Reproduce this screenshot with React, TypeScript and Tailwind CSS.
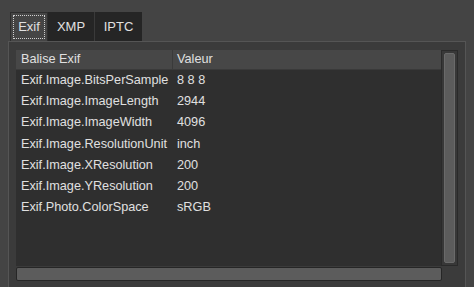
const rows: [string, string][] = [
  ['Exif.Image.BitsPerSample', '8 8 8'],
  ['Exif.Image.ImageLength', '2944'],
  ['Exif.Image.ImageWidth', '4096'],
  ['Exif.Image.ResolutionUnit', 'inch'],
  ['Exif.Image.XResolution', '200'],
  ['Exif.Image.YResolution', '200'],
  ['Exif.Photo.ColorSpace', 'sRGB'],
];

export default function App() {
  return (
    <div
      className="w-[474px] h-[287px] bg-[#444444] text-[12.7px] text-[#e0e0e0] overflow-hidden pt-[12px] pl-[8px] pr-[8px]"
      style={{ fontFamily: '"Liberation Sans", Arial, sans-serif' }}
    >
      {/* tabs */}
      <div className="flex h-[29px] pl-[2px] text-[13px]">
        <div className="w-[38px] bg-[#454545] border border-[#2e2e2e] border-b-0 p-[2px] flex">
          <div className="flex-1 border border-dotted border-[#d0d0d0] flex items-center justify-center">
            Exif
          </div>
        </div>
        <div className="w-[47px] bg-[#252525] border-r border-[#3a3a3a] flex items-center justify-center">
          XMP
        </div>
        <div className="w-[47px] bg-[#252525] flex items-center justify-center">IPTC</div>
      </div>

      {/* pane */}
      <div className="h-[250px] w-[458px] border-t border-l border-r border-[#555555] bg-[#3b3b3b] pt-[8px] pl-[7px] pr-[7px]">
        <div className="flex h-[216px]">
          <div className="w-[426px] bg-[#2f2f2f] flex flex-col">
            <div className="flex h-[20px] shrink-0 bg-[#474747] border-b border-[#3a3a3a]">
              <div className="w-[157px] pl-[5px] flex items-center border-r border-[#3a3a3a]">Balise Exif</div>
              <div className="flex-1 pl-[4px] flex items-center">Valeur</div>
            </div>
            {rows.map(([k, v]) => (
              <div key={k} className="flex h-[21.17px] shrink-0">
                <div className="w-[157px] pl-[5px] flex items-center whitespace-nowrap">{k}</div>
                <div className="flex-1 pl-[4px] flex items-center">{v}</div>
              </div>
            ))}
          </div>
          <div className="w-[17px] bg-[#383838] border border-[#2a2a2a] p-[2px] flex">
            <div className="flex-1 rounded-[2px] bg-[#5c5c5c] border border-[#6a6a6a]" />
          </div>
        </div>
        <div className="w-[426px] h-[14px] mt-[1px] rounded-[2px] bg-[#5c5c5c] border border-[#262626]" />
      </div>
    </div>
  );
}
